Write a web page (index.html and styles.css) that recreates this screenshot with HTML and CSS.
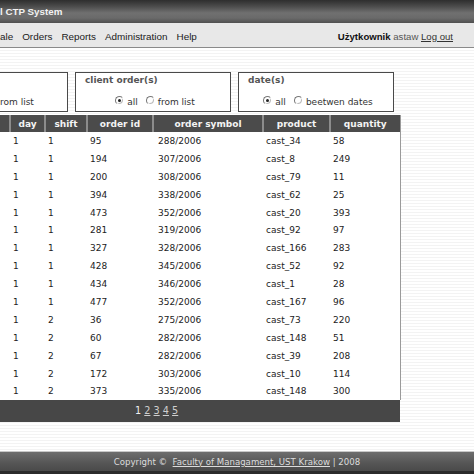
FILE: index.html
```html
<!DOCTYPE html>
<html>
<head>
<meta charset="utf-8">
<link rel="stylesheet" href="styles.css">
</head>
<body>
<div class="page">
  <div class="topbar"><span class="title">l CTP System</span></div>
  <div class="menubar">
    <div class="menu">
      <span>ale</span><span>Orders</span><span>Reports</span><span>Administration</span><span>Help</span>
    </div>
    <div class="user"><b>Użytkownik</b> <span class="login">astaw</span> <a class="logout">Log out</a></div>
  </div>
  <div class="filters">
    <div class="box box-cut">
      <div class="box-title">&nbsp;</div>
      <div class="opts opts-cut">rom list</div>
    </div>
    <div class="box">
      <div class="box-title">client order(s)</div>
      <div class="opts"><span class="radio on"></span>all <span class="radio"></span>from list</div>
    </div>
    <div class="box">
      <div class="box-title">date(s)</div>
      <div class="opts"><span class="radio on"></span>all <span class="radio"></span>beetwen dates</div>
    </div>
  </div>
  <div class="grid">
    <table>
      <colgroup>
        <col class="c0"><col class="c1"><col class="c2"><col class="c3"><col class="c4"><col class="c5"><col class="c6">
      </colgroup>
      <thead>
        <tr><th></th><th>day</th><th>shift</th><th>order id</th><th>order symbol</th><th>product</th><th>quantity</th></tr>
      </thead>
      <tbody>
        <tr><td></td><td>1</td><td>1</td><td>95</td><td>288/2006</td><td>cast_34</td><td>58</td></tr>
        <tr><td></td><td>1</td><td>1</td><td>194</td><td>307/2006</td><td>cast_8</td><td>249</td></tr>
        <tr><td></td><td>1</td><td>1</td><td>200</td><td>308/2006</td><td>cast_79</td><td>11</td></tr>
        <tr><td></td><td>1</td><td>1</td><td>394</td><td>338/2006</td><td>cast_62</td><td>25</td></tr>
        <tr><td></td><td>1</td><td>1</td><td>473</td><td>352/2006</td><td>cast_20</td><td>393</td></tr>
        <tr><td></td><td>1</td><td>1</td><td>281</td><td>319/2006</td><td>cast_92</td><td>97</td></tr>
        <tr><td></td><td>1</td><td>1</td><td>327</td><td>328/2006</td><td>cast_166</td><td>283</td></tr>
        <tr><td></td><td>1</td><td>1</td><td>428</td><td>345/2006</td><td>cast_52</td><td>92</td></tr>
        <tr><td></td><td>1</td><td>1</td><td>434</td><td>346/2006</td><td>cast_1</td><td>28</td></tr>
        <tr><td></td><td>1</td><td>1</td><td>477</td><td>352/2006</td><td>cast_167</td><td>96</td></tr>
        <tr><td></td><td>1</td><td>2</td><td>36</td><td>275/2006</td><td>cast_73</td><td>220</td></tr>
        <tr><td></td><td>1</td><td>2</td><td>60</td><td>282/2006</td><td>cast_148</td><td>51</td></tr>
        <tr><td></td><td>1</td><td>2</td><td>67</td><td>282/2006</td><td>cast_39</td><td>208</td></tr>
        <tr><td></td><td>1</td><td>2</td><td>172</td><td>303/2006</td><td>cast_10</td><td>114</td></tr>
        <tr><td></td><td>1</td><td>2</td><td>373</td><td>335/2006</td><td>cast_148</td><td>300</td></tr>
      </tbody>
    </table>
    <div class="pager"><span class="cur">1</span> <a>2</a> <a>3</a> <a>4</a> <a>5</a></div>
  </div>
  <div class="spacer"></div>
  <div class="footer">
    <div class="foot-text">Copyright ©&nbsp; <a>Faculty of Managament, UST Krakow</a> | 2008</div>
    <div class="foot-bottom"></div>
  </div>
</div>
</body>
</html>
```
FILE: styles.css
```css
html, body {
  margin: 0;
  padding: 0;
}
body {
  width: 474px;
  height: 474px;
  overflow: hidden;
  font-family: "DejaVu Sans", Verdana, sans-serif;
  background: repeating-linear-gradient(#ffffff 0, #ffffff 2px, #f3f3f3 2px, #f3f3f3 3px);
}
.page {
  display: flex;
  flex-direction: column;
  height: 474px;
}
.topbar {
  height: 23px;
  background: linear-gradient(#2e2e2e 0, #4a4a4a 6px, #707070 13px, #6a6a6a 18px, #505050 23px);
  display: flex;
  align-items: center;
}
.title {
  font-family: "Liberation Sans", Arial, sans-serif;
  font-weight: bold;
  font-size: 9.8px;
  color: #f2f2f2;
  padding-left: 0;
  padding-bottom: 1px;
}
.menubar {
  height: 24px;
  background: #e8e8e8;
  border-bottom: 1px solid #8a8a8a;
  box-shadow: 0 1px 0 #ffffff;
  display: flex;
  align-items: center;
  justify-content: space-between;
  font-family: "Liberation Sans", Arial, sans-serif;
  font-size: 9.9px;
  color: #1a1a1a;
}
.menu {
  display: flex;
  gap: 9px;
  padding-top: 2px;
}
.menu span:first-child {
  margin-right: 0;
}
.user {
  padding-right: 21px;
  padding-top: 2px;
  font-size: 9.6px;
}
.user b {
  color: #111;
}
.login {
  color: #555;
}
.logout {
  color: #333;
  text-decoration: underline;
}
.filters {
  display: flex;
  gap: 7px;
  margin-top: 24px;
}
.box {
  width: 154px;
  height: 38px;
  border: 1px solid #4a4a4a;
  background: #fff;
  display: flex;
  flex-direction: column;
  font-size: 9px;
  color: #333;
}
.box-cut {
  width: 67px;
  border-left: none;
}
.box-title {
  font-weight: bold;
  color: #555;
  padding: 2px 0 0 9px;
  height: 16px;
}
.opts {
  display: flex;
  align-items: center;
  justify-content: center;
  padding-top: 6px;
  padding-left: 4px;
  color: #333;
}
.opts-cut {
  justify-content: flex-start;
  padding-left: 0;
}
.radio {
  display: inline-block;
  width: 7px;
  height: 7px;
  border-radius: 50%;
  border: 1px solid #fff;
  border-left-color: #777;
  border-top-color: #777;
  box-shadow: -1px -1px 0 #bbb inset;
  margin: 0 3px 0 0;
  position: relative;
  top: -2px;
}
.radio.on::after {
  content: "";
  position: absolute;
  left: 2px;
  top: 2px;
  width: 3px;
  height: 3px;
  border-radius: 50%;
  background: #222;
}
.opts .radio:nth-of-type(2) {
  margin-left: 8px;
}
.grid {
  width: 400px;
  margin-top: 3px;
  background: #fff;
}
table {
  width: 400px;
  border-collapse: collapse;
  table-layout: fixed;
  font-size: 9px;
  border-right: 1px solid #9a9a9a;
}
.c0 { width: 10px; }
.c1 { width: 35px; }
.c2 { width: 42px; }
.c3 { width: 66px; }
.c4 { width: 110px; }
.c5 { width: 67px; }
.c6 { width: 70px; }
th {
  height: 17px;
  background: #4b4b4b;
  color: #f4f4f4;
  font-weight: bold;
  text-align: center;
  padding: 0;
  border-left: 2px solid #8c8c8c;
}
th:first-child {
  border-left: none;
}
td {
  height: 17.9px;
  padding: 0 0 0 3px;
  color: #222;
  white-space: nowrap;
}
td:nth-child(5) {
  padding-left: 5px;
}
.pager {
  height: 22px;
  line-height: 22px;
  background: #474747;
  padding-left: 135px;
  font-size: 9.7px;
  color: #f0f0f0;
  white-space: pre;
}
.pager a {
  color: #cfcfcf;
  text-decoration: underline;
}
.spacer {
  flex: 1;
}
.footer {
  height: 23px;
  display: flex;
  flex-direction: column;
}
.foot-text {
  height: 19px;
  background: linear-gradient(#6e6e6e, #555 60%, #4a4a4a);
  border-top: 1px solid #c8c8c8;
  display: flex;
  align-items: center;
  justify-content: center;
  font-size: 8.6px;
  color: #dcdcdc;
  white-space: pre;
}
.foot-text a {
  color: #dcdcdc;
  text-decoration: underline;
}
.foot-bottom {
  flex: 1;
  background: #2b2b2b;
}
```
